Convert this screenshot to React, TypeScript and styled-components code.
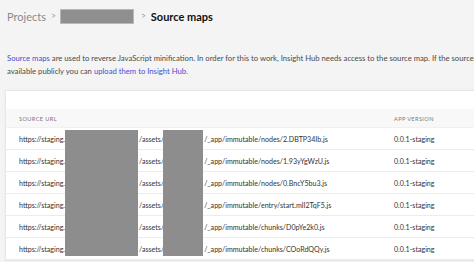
import React from "react";
import styled, { createGlobalStyle } from "styled-components";

const Global = createGlobalStyle`
  html, body { margin: 0; padding: 0; background: #f4f4f4; overflow: hidden; }
  body { font-family: Lato, "Open Sans", sans-serif; color: #333; }
`;

const Page = styled.div`
  width: 474px;
  height: 262px;
  overflow: hidden;
  padding-left: 7px;
  box-sizing: border-box;
`;

const Breadcrumb = styled.div`
  display: flex;
  align-items: center;
  height: 32px;
  font-size: 11px;
  white-space: nowrap;
`;

const Crumb = styled.span`
  color: #8a8a8a;
`;

const Current = styled.span`
  color: #111;
  font-weight: 700;
`;

const Chevron = styled.span<{ $l: number; $r: number }>`
  color: #9a9a9a;
  font-size: 8.5px;
  margin: 0 ${(p) => p.$r}px 0 ${(p) => p.$l}px;
`;

const Redact = styled.span<{ $w: number }>`
  display: inline-block;
  width: ${(p) => p.$w}px;
  height: 15px;
  background: #8f8f8f;
  border: 1px solid #b8b8b8;
  box-sizing: border-box;
`;

const Intro = styled.p`
  margin: 20px 0 0 0;
  font-size: 7.7px;
  line-height: 13px;
  color: #4a4a4a;
  white-space: nowrap;
`;

const Link = styled.a`
  color: #4b4bd0;
  text-decoration: none;
`;

const Card = styled.div`
  margin: 12px 0 0 -2px;
  width: 600px;
  background: #fff;
  border: 1px solid #e8e8e8;
  box-shadow: 0 0 2px rgba(0, 0, 0, 0.06);
  padding-top: 18px;
`;

const Row = styled.div<{ $head?: boolean }>`
  display: grid;
  grid-template-columns: 375px 1fr;
  align-items: center;
  height: ${(p) => (p.$head ? 19 : 22)}px;
  background: ${(p) => (p.$head ? "#f8f8f8" : "#fff")};
  border-bottom: 1px solid ${(p) => (p.$head ? "#f0f0f0" : "#ececec")};
  box-sizing: border-box;
`;

const HeadCell = styled.div`
  padding-left: 13px;
  font-size: 5.6px;
  letter-spacing: 0.4px;
  text-transform: uppercase;
  color: #777;
`;

const Cell = styled.div`
  padding-left: 13px;
  font-size: 7.1px;
  color: #333;
  white-space: nowrap;
  padding-top: 2px;
`;

const Gap = styled.span<{ $w: number }>`
  display: inline-block;
  width: ${(p) => p.$w}px;
`;

const Body = styled.div`
  position: relative;
`;

const Mask = styled.div<{ $x: number; $w: number }>`
  position: absolute;
  left: ${(p) => p.$x}px;
  width: ${(p) => p.$w}px;
  top: 2px;
  bottom: 4px;
  background: #8d8d8d;
`;

const files = [
  "nodes/2.DBTP34Ib.js",
  "nodes/1.93yYgWzU.js",
  "nodes/0.BncY5bu3.js",
  "entry/start.mlI2TqF5.js",
  "chunks/D0pYe2k0.js",
  "chunks/COoRdQQy.js",
];

export default function App() {
  return (
    <>
      <Global />
      <Page>
        <Breadcrumb>
          <Crumb>Projects</Crumb>
          <Chevron $l={5} $r={4}>&gt;</Chevron>
          <Redact $w={74} />
          <Chevron $l={7} $r={5}>&gt;</Chevron>
          <Current>Source maps</Current>
        </Breadcrumb>
        <Intro>
          <Link>Source maps</Link> are used to reverse JavaScript minification. In order for this to work,
          Insight Hub needs access to the source map. If the source map is not
          <br />
          available publicly you can <Link>upload them to Insight Hub.</Link>
        </Intro>
        <Card>
          <Row $head>
            <HeadCell>Source URL</HeadCell>
            <HeadCell>App version</HeadCell>
          </Row>
          <Body>
            {files.map((f) => (
              <Row key={f}>
                <Cell>
                  https://staging.
                  <Gap $w={74} />
                  /assets/
                  <Gap $w={40} />
                  /_app/immutable/{f}
                </Cell>
                <Cell>0.0.1-staging</Cell>
              </Row>
            ))}
            <Mask $x={59} $w={73} />
            <Mask $x={157} $w={40} />
          </Body>
        </Card>
      </Page>
    </>
  );
}
